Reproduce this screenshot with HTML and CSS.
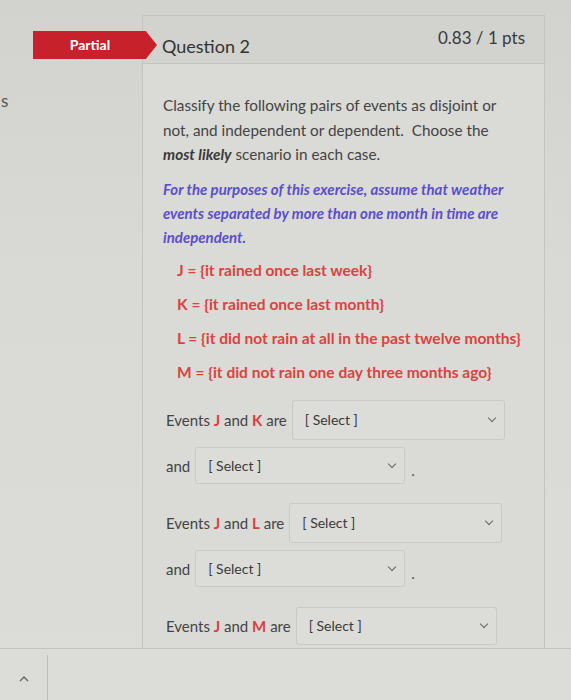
FILE: index.html
```html
<!DOCTYPE html>
<html lang="en">
<head>
    <meta charset="UTF-8">
    <title>Question 2</title>
    <link rel="stylesheet" href="styles.css">
</head>
<body>
    <div class="layout">
        <div class="side-nav">
            <span class="side-label">s</span>
        </div>
        <div class="question-card">
            <div class="question-badge">Partial</div>
            <div class="question-header">
                <h2 class="question-title">Question 2</h2>
                <span class="question-points">0.83 / 1 pts</span>
            </div>
            <div class="question-body">
                <p class="intro">Classify the following pairs of events as disjoint or not, and independent or dependent.&nbsp; Choose the <strong><em>most likely</em></strong> scenario in each case.</p>
                <p class="note">For the purposes of this exercise, assume that weather events separated by more than one month in time are independent.</p>

                <p class="event-def">J = {it rained once last week}</p>
                <p class="event-def">K = {it rained once last month}</p>
                <p class="event-def">L = {it did not rain at all in the past twelve months}</p>
                <p class="event-def">M = {it did not rain one day three months ago}</p>

                <div class="pair">
                    <div class="pair-line">
                        <span class="pair-text">Events <b>J</b> and <b>K</b> are</span>
                        <div class="fake-select wide"><span>[ Select ]</span><i class="chev"></i></div>
                    </div>
                    <div class="pair-line">
                        <span class="pair-text">and</span>
                        <div class="fake-select"><span>[ Select ]</span><i class="chev"></i></div>
                        <span class="stop">.</span>
                    </div>
                </div>

                <div class="pair">
                    <div class="pair-line">
                        <span class="pair-text">Events <b>J</b> and <b>L</b> are</span>
                        <div class="fake-select wide"><span>[ Select ]</span><i class="chev"></i></div>
                    </div>
                    <div class="pair-line">
                        <span class="pair-text">and</span>
                        <div class="fake-select"><span>[ Select ]</span><i class="chev"></i></div>
                        <span class="stop">.</span>
                    </div>
                </div>

                <div class="pair">
                    <div class="pair-line">
                        <span class="pair-text">Events <b>J</b> and <b>M</b> are</span>
                        <div class="fake-select short"><span>[ Select ]</span><i class="chev"></i></div>
                    </div>
                </div>
            </div>
        </div>
    </div>
    <div class="footer-bar">
        <div class="footer-toggle">
            <svg width="10" height="7" viewBox="0 0 10 7"><path d="M1 6 L5 2 L9 6" fill="none" stroke="#666" stroke-width="1.4"/></svg>
        </div>
    </div>
</body>
</html>
```

FILE: styles.css
```css
/* Page */
body {
    margin: 0;
    font-family: Lato, "Open Sans", sans-serif;
    color: #3d3d3d;
    background: linear-gradient(180deg, #d2d2ce 0%, #d9d9d5 40%, #dcdcd8 100%);
    height: 700px;
    overflow: hidden;
}

.layout {
    display: flex;
    padding-top: 15px;
}

/* Cut-off sidebar on the left */
.side-nav {
    width: 142px;
    flex-shrink: 0;
    padding-top: 75px;
}

.side-label {
    display: block;
    margin-left: 1px;
    font-size: 17px;
    color: #555;
}

/* Question card */
.question-card {
    position: relative;
    width: 401px;
    border: 1px solid #c3c3bf;
    border-bottom: none;
}

.question-badge {
    position: absolute;
    left: -110px;
    top: 15px;
    width: 124px;
    height: 28px;
    line-height: 28px;
    padding-right: 10px;
    box-sizing: border-box;
    background: #c7212b;
    color: #fff;
    font-weight: bold;
    font-size: 14px;
    text-align: center;
    clip-path: polygon(0 0, 91% 0, 100% 50%, 91% 100%, 0 100%);
}

.question-header {
    display: flex;
    justify-content: space-between;
    align-items: flex-start;
    height: 47px;
    padding: 0 19px 0 19px;
    background: #d2d2ce;
    border-bottom: 1px solid #c3c3bf;
}

.question-title {
    margin: 19px 0 0 0;
    font-size: 18px;
    font-weight: normal;
    color: #333;
}

.question-points {
    margin-top: 11px;
    font-size: 17px;
    color: #3a3a3a;
}

.question-body {
    height: 584px;
    box-sizing: border-box;
    background: #dadad6;
    padding: 29px 20px 0 20px;
}

.question-body p {
    margin: 0;
}

.intro {
    font-size: 15.3px;
    line-height: 24.5px;
    color: #444;
}

.intro strong {
    color: #3a3a3a;
}

.note {
    margin-top: 10px !important;
    font-size: 15px;
    line-height: 24px;
    font-style: italic;
    font-weight: bold;
    color: #5a4fcc;
}

.event-def {
    margin-left: 14px !important;
    font-size: 15.5px;
    line-height: 34px;
    font-weight: bold;
    color: #d8443f;
}

.note + .event-def {
    margin-top: 4px !important;
}

/* Pairs with dropdowns */
.pair {
    margin-top: 11px;
}

.pair + .pair {
    margin-top: 17px;
}

.pair-line {
    display: flex;
    align-items: center;
    height: 40px;
    margin-bottom: 6px;
}

.pair-text {
    padding-left: 3px;
    margin-right: 5px;
    font-size: 15px;
    color: #444;
}

.pair-text b {
    color: #d8403c;
}

.fake-select {
    position: relative;
    display: flex;
    align-items: center;
    width: 210px;
    height: 37px;
    padding-left: 12px;
    box-sizing: border-box;
    border: 1px solid #c9c9c5;
    border-radius: 3px;
    background: #dcdcd8;
    font-size: 14px;
    color: #3a3a3a;
}

.fake-select.wide {
    width: 213px;
    height: 40px;
}

.fake-select.short {
    width: 201px;
    height: 38px;
}

.chev {
    position: absolute;
    right: 9px;
    top: 50%;
    width: 5px;
    height: 5px;
    margin-top: -5px;
    border-right: 1.3px solid #666;
    border-bottom: 1.3px solid #666;
    transform: rotate(45deg);
}

.stop {
    margin-left: 6px;
    margin-top: 8px;
    font-size: 15px;
    color: #555;
}

/* Bottom bar */
.footer-bar {
    display: flex;
    height: 52px;
    border-top: 1px solid #c3c3bf;
    background: #dcdcd8;
}

.footer-toggle {
    display: flex;
    align-items: center;
    justify-content: center;
    width: 47px;
    margin-top: 6px;
    border-right: 1px solid #bdbdb9;
}
```
